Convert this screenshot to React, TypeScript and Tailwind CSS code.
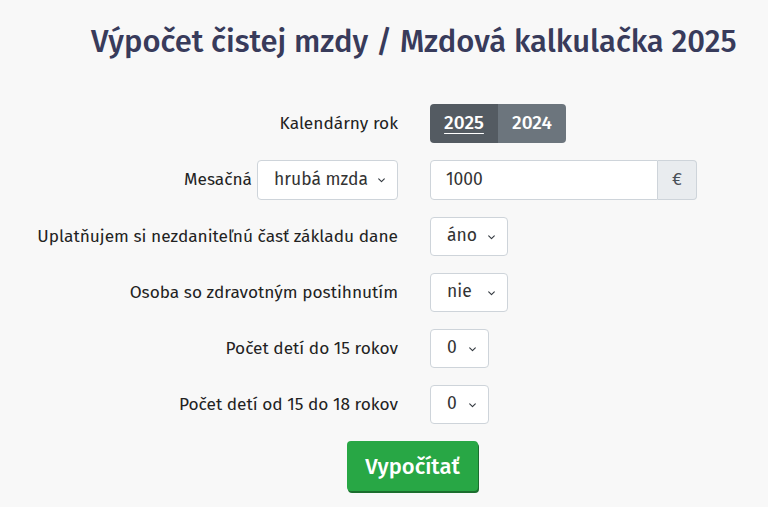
import { useState } from 'react';

const font = { fontFamily: '"Fira Sans", "Open Sans", "Liberation Sans", sans-serif' };

function Chevron() {
  return (
    <svg className="pointer-events-none absolute right-3 top-1/2 -translate-y-1/2" width="9" height="9" viewBox="0 0 16 16" fill="none">
      <path d="M3 6l5 5 5-5" stroke="#343a40" strokeWidth="2" strokeLinecap="round" strokeLinejoin="round" />
    </svg>
  );
}

function Select({ value, options, width, height = 'h-[39px]' }: { value: string; options: string[]; width: string; height?: string }) {
  return (
    <div className={`relative ${height} ${width}`}>
      <select
        defaultValue={value}
        className="h-full w-full appearance-none rounded border border-[#ced4da] bg-white pl-4 pr-7 text-[17.5px] font-normal text-[#333] outline-none"
        style={font}
      >
        {options.map((o) => (
          <option key={o}>{o}</option>
        ))}
      </select>
      <Chevron />
    </div>
  );
}

export default function App() {
  const [year, setYear] = useState('2025');

  return (
    <div className="min-h-[507px] w-full bg-[#f8f8f8] text-[#222]" style={font}>
      <h1 className="pl-[91px] pt-[20px] text-[31px] font-medium leading-[44px] text-[#383b5b]">
        Výpočet čistej mzdy / Mzdová kalkulačka 2025
      </h1>

      <div className="mt-[40px] grid grid-cols-[398px_1fr] items-center gap-x-8 gap-y-[17px] text-[17.3px]">
        {/* Kalendárny rok */}
        <div className="text-right">Kalendárny rok</div>
        <div className="flex">
          <div className="flex h-[39px] overflow-hidden rounded text-[19px] font-medium text-white">
            {['2025', '2024'].map((y) => (
              <button
                key={y}
                onClick={() => setYear(y)}
                className={`w-[68px] ${year === y ? 'bg-[#545b62] underline underline-offset-4' : 'bg-[#6c757d]'}`}
              >
                {y}
              </button>
            ))}
          </div>
        </div>

        {/* Mesačná */}
        <div className="flex items-center justify-end gap-[5px]">
          <span>Mesačná</span>
          <Select value="hrubá mzda" options={['hrubá mzda', 'čistá mzda']} width="w-[141px]" height="h-[40px]" />
        </div>
        <div className="flex h-[40px] w-[267px]">
          <input
            defaultValue="1000"
            className="w-[228px] rounded-l border border-[#ced4da] bg-white pl-[15px] text-[17.5px] text-[#333] outline-none"
            style={font}
          />
          <span className="flex w-[39px] items-center justify-center rounded-r border border-l-0 border-[#ced4da] bg-[#e9ecef] text-[#495057]">
            €
          </span>
        </div>

        <div className="text-right">Uplatňujem si nezdaniteľnú časť základu dane</div>
        <Select value="áno" options={['áno', 'nie']} width="w-[78px]" />

        <div className="text-right">Osoba so zdravotným postihnutím</div>
        <Select value="nie" options={['nie', 'áno']} width="w-[78px]" />

        <div className="text-right">Počet detí do 15 rokov</div>
        <Select value="0" options={['0', '1', '2', '3', '4', '5']} width="w-[59px]" />

        <div className="text-right">Počet detí od 15 do 18 rokov</div>
        <Select value="0" options={['0', '1', '2', '3', '4', '5']} width="w-[59px]" />
      </div>

      <div className="mt-[17px] flex pl-[347px]">
        <button className="h-[50px] w-[131px] rounded bg-[#28a745] text-[22px] font-medium text-white shadow-[1px_2px_0_#1b6e2e]">
          Vypočítať
        </button>
      </div>
    </div>
  );
}
